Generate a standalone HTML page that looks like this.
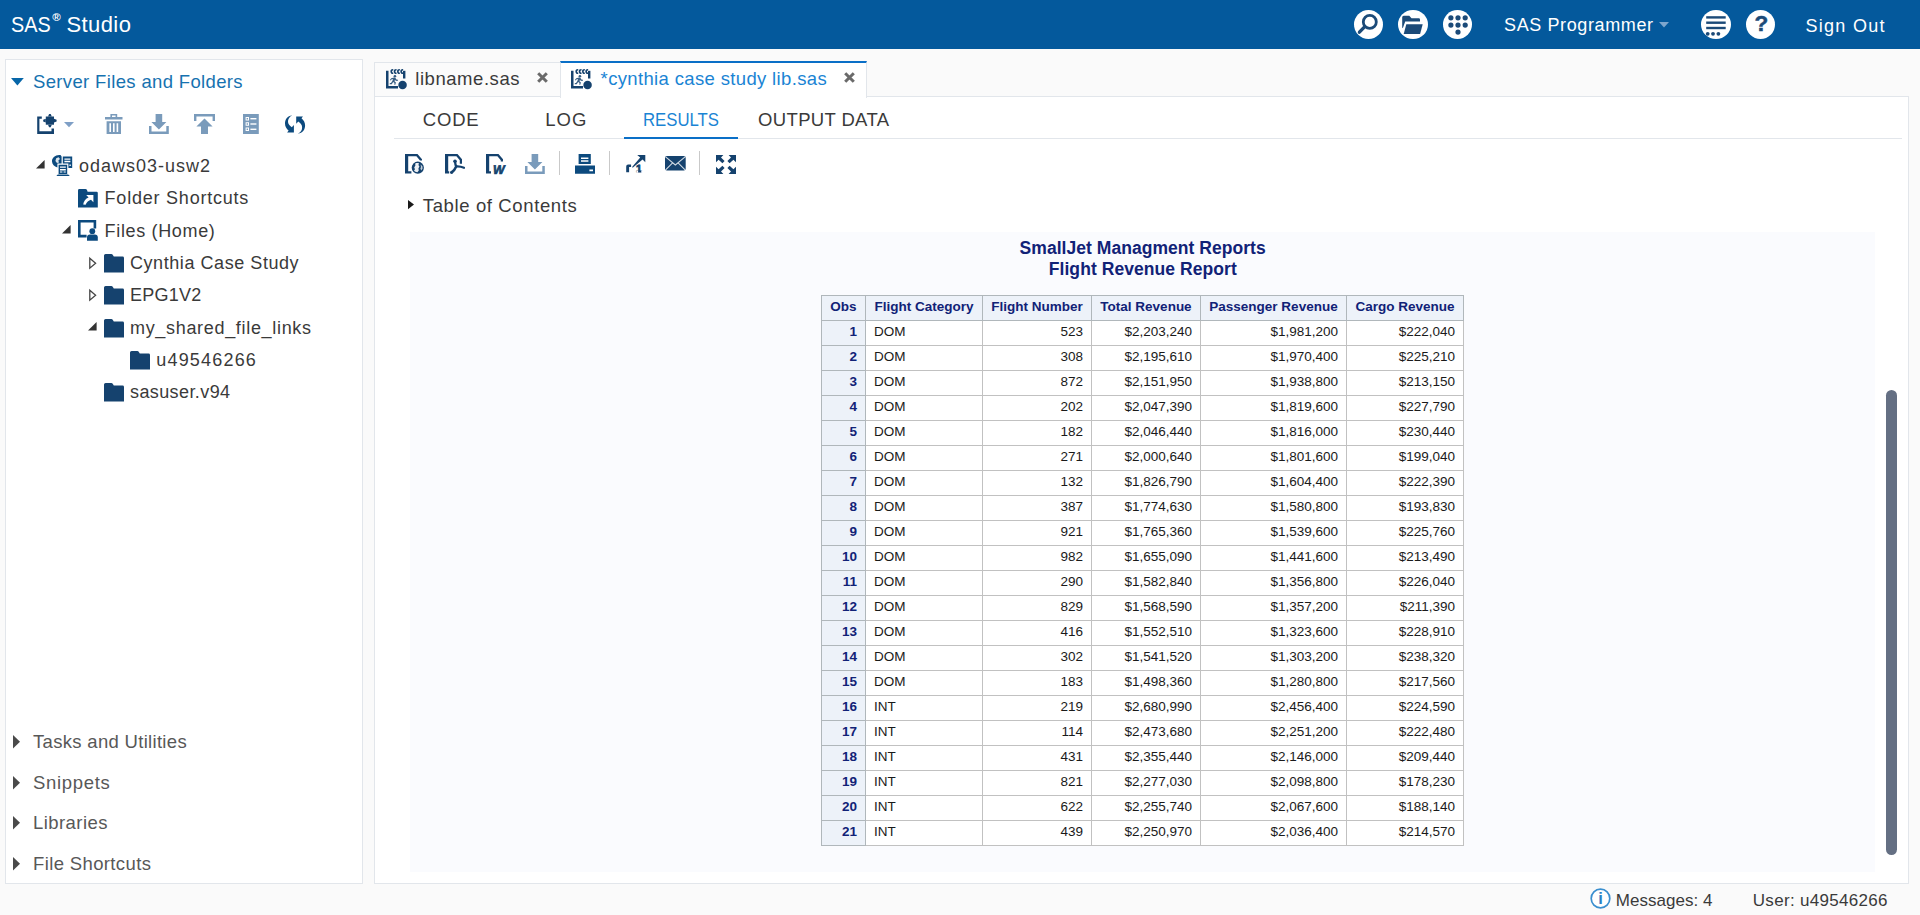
<!DOCTYPE html><html lang="en"><head><meta charset="utf-8"><title>SAS Studio</title><style>
*{box-sizing:border-box}
html,body{margin:0;padding:0}
body{width:1920px;height:915px;overflow:hidden;background:#fafafa;font-family:"Liberation Sans",sans-serif;position:relative}
.t{position:absolute;white-space:pre;line-height:1}
.abs{position:absolute}
svg{position:absolute;overflow:visible}
#hdr{position:absolute;left:0;top:0;width:1920px;height:48.5px;background:#04599c}
.circ{position:absolute;top:10px;width:29px;height:29px;border-radius:50%;background:#fff}
#left{position:absolute;left:5px;top:59px;width:357.5px;height:824.5px;background:#fff;border:1px solid #e2e6eb}
#main{position:absolute;left:374px;top:96px;width:1535px;height:787.5px;background:#fff;border:1px solid #e2e6eb}
#tab1{position:absolute;left:374px;top:62px;width:186.5px;height:35px;background:#fbfbfb;border:1px solid #e2e6eb}
#tab2{position:absolute;left:559.5px;top:60.5px;width:307.5px;height:37px;background:#fff;border-left:1px solid #e2e6eb;border-right:1px solid #e2e6eb;border-top:2.5px solid #0a6fc7}
#subline{position:absolute;left:394px;top:138px;width:1508px;height:1px;background:#e2e6eb}
#resline{position:absolute;left:624px;top:136.5px;width:114px;height:2.5px;background:#0a6fc7}
.sep{position:absolute;top:151px;width:1px;height:24px;background:#c9c9c9}
#res{position:absolute;left:410px;top:232px;width:1465px;height:639.5px;background:#fafbfe}
#sb{position:absolute;left:1886px;top:390px;width:11px;height:465px;border-radius:5.5px;background:#646f83}
table.r{position:absolute;left:821px;top:295px;border-collapse:collapse;table-layout:fixed;font-size:13.5px;color:#000}
table.r td,table.r th{border:1px solid #c1c1c1;height:25px;padding:0 8px 3px 8px;line-height:17px;vertical-align:middle;white-space:nowrap;overflow:hidden}
table.r th{background:#edf2f9;color:#112277;font-weight:700;border-color:#b0b7bb;text-align:center}
table.r th.o{text-align:right}
table.r td{background:#fff;text-align:right;color:#1a1a1a}
table.r td.l{text-align:left}
</style></head><body>
<div id="hdr"></div>
<span class="t" style="left:10.5px;top:14.0px;font-size:22px;color:#fff;transform:scaleX(.9);transform-origin:0 0;">SAS</span>
<span class="t" style="left:52.2px;top:11.6px;font-size:11.5px;color:#fff;font-weight:700;">®</span>
<span class="t" style="left:66.5px;top:14.0px;font-size:22px;color:#fff;letter-spacing:0.4px;">Studio</span>
<div class="circ" style="left:1353.9px;width:29.0px"></div>
<div class="circ" style="left:1398.1px;width:29.7px"></div>
<div class="circ" style="left:1443px;width:29.2px"></div>
<div class="circ" style="left:1700.9px;width:29.9px"></div>
<div class="circ" style="left:1746px;width:29.0px"></div>
<svg style="left:1353px;top:9px" width="31" height="31" viewBox="1353 9 31 31"><circle cx="1369.8" cy="21.9" r="6.5" fill="none" stroke="#1b4a78" stroke-width="2.8"/><path d="M1364.8 26.6 L1359.4 32.2" stroke="#1b4a78" stroke-width="3.3" stroke-linecap="round"/></svg>
<svg style="left:1398px;top:9px" width="31" height="31" viewBox="1398 9 31 31"><path d="M1402.2 27.5 V17.2 q0-1.5 1.5-1.5 h5.6 l2.2 2.5 h7.3 q1.2 0 1.2 1.2 v2 h-14.8 l-2.4 6.8z" fill="#1b4a78"/><path d="M1406.3 24.3 H1422.7 L1420.1 33.9 H1403.7z" fill="#1b4a78"/></svg>
<svg style="left:1443px;top:9px" width="31" height="31" viewBox="1443 9 31 31"><g fill="#1b4a78"><circle cx="1450.9" cy="17.85" r="2.6"/><circle cx="1458" cy="17.85" r="2.6"/><circle cx="1465.2" cy="17.85" r="2.6"/><circle cx="1450.9" cy="25.1" r="2.6"/><circle cx="1458" cy="25.1" r="2.6"/><circle cx="1465.2" cy="25.1" r="2.6"/><circle cx="1458" cy="32.1" r="2.6"/></g></svg>
<span class="t" style="left:1504.0px;top:15.6px;font-size:18px;color:#fff;letter-spacing:0.62px;">SAS Programmer</span>
<svg style="left:1659px;top:22px" width="10" height="6" viewBox="0 0 10 6"><path d="M0 0H10L5 5.5z" fill="#7ea6cd"/></svg>
<svg style="left:1700px;top:9px" width="31" height="31" viewBox="1700 9 31 31"><g fill="#1b4a78"><rect x="1706.2" y="16.2" width="19.5" height="2.4"/><rect x="1706.2" y="21.5" width="19.5" height="2.4"/><rect x="1706.2" y="26.8" width="19.5" height="2.4"/><circle cx="1707.7" cy="33.8" r="1.9"/><circle cx="1713" cy="33.8" r="1.9"/><circle cx="1718.4" cy="33.8" r="1.9"/></g></svg>
<span class="t" style="left:1754.6px;top:13.4px;font-size:22.5px;font-weight:700;-webkit-text-stroke:0.5px #1b4a78;color:#1b4a78">?</span>
<span class="t" style="left:1805.5px;top:16.8px;font-size:18px;color:#fff;letter-spacing:1.28px;">Sign Out</span>
<div id="left"></div>
<svg style="left:11px;top:78px" width="13" height="8" viewBox="0 0 13 8"><path d="M0 0H12.8L6.4 7.6z" fill="#0766a8"/></svg>
<span class="t" style="left:33.0px;top:73.0px;font-size:18.5px;color:#1672b0;letter-spacing:0.35px;">Server Files and Folders</span>
<svg style="left:36px;top:113px" width="22" height="22" viewBox="36 113 22 22"><g fill="#15426e"><path d="M41.8 116.6H37.2V133.9H54V128.5H51.5V131.2H39.4V118.7H41.8z"/><rect x="45.8" y="116.5" width="8.2" height="8.2"/><path d="M48.0 116.5L49.1 113.89999999999999H50.699999999999996L51.8 116.5zM48.0 124.69999999999999L49.1 127.3H50.699999999999996L51.8 124.69999999999999zM45.8 118.69999999999999L43.199999999999996 119.8V121.39999999999999L45.8 122.5zM54.0 118.69999999999999L56.6 119.8V121.39999999999999L54.0 122.5z"/></g></svg>
<svg style="left:64px;top:122px" width="10" height="6" viewBox="0 0 10 6"><path d="M0 0H10L5 5.3z" fill="#7f9fc6"/></svg>
<svg style="left:104px;top:113px" width="20" height="22" viewBox="104 113 20 22"><g fill="#7a9bbb"><path d="M110.4 114H117.2V117H122.5V119.6H105V117H110.4z M112 115.4V117H115.6V115.4z"/><path d="M106.6 121.2H121V134H106.6z M109.4 123.2V132H111V123.2z M113 123.2V132H114.6V123.2z M116.6 123.2V132H118.2V123.2z" fill-rule="evenodd"/></g></svg>
<svg style="left:149px;top:114px" width="20" height="20" viewBox="0 0 20 20"><g fill="#7a9bbb"><path d="M6.6 0H13.2V8H17.4L9.9 15.6L2.4 8H6.6z"/><path d="M0 12H2.5V17.5H17.3V12H19.8V20H0z"/></g></svg>
<svg style="left:194px;top:114px" width="21" height="20" viewBox="0 0 21 20"><g fill="#7a9bbb"><path d="M0 0H21V7H18.6V2.4H2.4V7H0z"/><path d="M10.5 4.6L18.6 12.4H14V20H7V12.4H2.4z"/></g></svg>
<svg style="left:243px;top:114px" width="16" height="20" viewBox="0 0 16 20"><rect width="15.8" height="20" fill="#7a9bbb"/><g fill="#fff"><path d="M2.6 3H6V6.4H2.6z M3.6 4V5.4H5V4z" fill-rule="evenodd"/><path d="M2.6 8.3H6V11.7H2.6z M3.6 9.3V10.7H5V9.3z" fill-rule="evenodd"/><path d="M2.6 13.6H6V17H2.6z M3.6 14.6V16H5V14.6z" fill-rule="evenodd"/><rect x="7.4" y="4" width="6" height="1.4"/><rect x="7.4" y="9.3" width="6" height="1.4"/><rect x="7.4" y="14.6" width="6" height="1.4"/></g></svg>
<svg style="left:285px;top:115px" width="21" height="19" viewBox="0 0 21 19"><g fill="#0c4a7e"><path d="M7.1 0.4C3 0.2 0 4 0 8.4C0 11.6 1.6 13.8 3.6 15.6L2.1 17.5H8.9V10.1L6.8 12.3C4.6 10.6 3.2 9 3 7C2.8 4 4.4 1.6 7.1 0.4z"/><path d="M7.1 0.4C3 0.2 0 4 0 8.4C0 11.6 1.6 13.8 3.6 15.6L2.1 17.5H8.9V10.1L6.8 12.3C4.6 10.6 3.2 9 3 7C2.8 4 4.4 1.6 7.1 0.4z" transform="rotate(180 10.05 9.45)"/></g></svg>
<svg style="left:36.3px;top:160.4px" width="9" height="9" viewBox="0 0 9 9"><path d="M8.6 0V8.6H0z" fill="#333"/></svg>
<svg style="left:51px;top:154px" width="23" height="23" viewBox="51 154 23 23"><g fill="#0c4a7e">
<path d="M60.5 155C55.5 154.4 51.8 157.6 52 161.6C52.2 164.4 54.2 166.6 57.4 167.4V163.4H61.6V156.6z"/>
<path d="M62.8 156.6H72.2V168H68.4V163.4H62.8z M64.4 158.4V159.8H70.4V158.4z M64.4 160.8V162.2H70.4V160.8z M69.4 164.4V166H70.8V164.4z" fill-rule="evenodd"/>
<path d="M58.6 164.7H67.2V174H58.6z M60 166.4V167.8H65.8V166.4z M60 169V170.4H65.8V169z M60 171.4V172.6H62.4V171.4z M63.6 171.4V172.6H65.8V171.4z" fill-rule="evenodd"/>
<path d="M56.4 176L57.8 174.4H68.2L69.8 176z"/></g>
<path d="M56.2 158.2L58.6 157.2L60 159L58.4 160.6L59 162.4L57 163L55.4 161z" fill="#fff" opacity=".85"/></svg>
<span class="t" style="left:79.0px;top:156.5px;font-size:18px;color:#3a3a3a;letter-spacing:1.0px;">odaws03-usw2</span>
<svg style="left:78px;top:188.8px" width="20" height="19" viewBox="0 0 20 19"><path d="M0 1.4Q0 0 1.4 0H7.4Q8.6 0 9 1.1L9.6 2.7H18.6Q19.8 2.7 19.8 4V18.6H0z" fill="#0c4a7e"/>
<path d="M8.2 6H15.4V13.2L13 10.8C10.6 11.4 8.6 13.2 7.6 15.8L5.2 15.6C5.6 12 7.6 9.6 10.6 8.4z" fill="#fff"/></svg>
<span class="t" style="left:104.6px;top:188.6px;font-size:18px;color:#3a3a3a;letter-spacing:0.78px;">Folder Shortcuts</span>
<svg style="left:61.9px;top:225.4px" width="9" height="9" viewBox="0 0 9 9"><path d="M8.6 0V8.6H0z" fill="#333"/></svg>
<svg style="left:78px;top:220px" width="20" height="21" viewBox="0 0 20 21"><g fill="#0c4a7e"><path d="M0 0H18.2V8.6H15.6V2.6H2.6V14.8H8.6V17.4H0z"/><circle cx="14.3" cy="11.2" r="2.9"/><path d="M9 20.8V17.6Q9 14.6 12 14.6H16.8Q19.8 14.6 19.8 17.6V20.8z"/></g></svg>
<span class="t" style="left:104.6px;top:221.75px;font-size:18px;color:#3a3a3a;letter-spacing:0.66px;">Files (Home)</span>
<svg style="left:88.6px;top:256.6px" width="8" height="13" viewBox="0 0 8 13"><path d="M0.8 1.2L6.6 6.2L0.8 11.2z" fill="none" stroke="#444" stroke-width="1.3" stroke-linejoin="miter"/></svg>
<svg style="left:104px;top:254.3px" width="20" height="19" viewBox="0 0 20 19"><path d="M0 1.6Q0 0 1.6 0H7.2Q8.4 0 9 1.2L9.8 2.6H18.6Q20 2.6 20 4V18.4H0z" fill="#15426e"/></svg>
<span class="t" style="left:130.0px;top:254.0px;font-size:18px;color:#3a3a3a;letter-spacing:0.56px;">Cynthia Case Study</span>
<svg style="left:88.6px;top:288.6px" width="8" height="13" viewBox="0 0 8 13"><path d="M0.8 1.2L6.6 6.2L0.8 11.2z" fill="none" stroke="#444" stroke-width="1.3" stroke-linejoin="miter"/></svg>
<svg style="left:104px;top:286.2px" width="20" height="19" viewBox="0 0 20 19"><path d="M0 1.6Q0 0 1.6 0H7.2Q8.4 0 9 1.2L9.8 2.6H18.6Q20 2.6 20 4V18.4H0z" fill="#15426e"/></svg>
<span class="t" style="left:130.0px;top:286.0px;font-size:18px;color:#3a3a3a;letter-spacing:0.24px;">EPG1V2</span>
<svg style="left:87.8px;top:322.2px" width="9" height="9" viewBox="0 0 9 9"><path d="M8.6 0V8.6H0z" fill="#333"/></svg>
<svg style="left:104px;top:318.6px" width="20" height="19" viewBox="0 0 20 19"><path d="M0 1.6Q0 0 1.6 0H7.2Q8.4 0 9 1.2L9.8 2.6H18.6Q20 2.6 20 4V18.4H0z" fill="#15426e"/></svg>
<span class="t" style="left:130.0px;top:318.75px;font-size:18px;color:#3a3a3a;letter-spacing:0.68px;">my_shared_file_links</span>
<svg style="left:129.5px;top:351.1px" width="20" height="19" viewBox="0 0 20 19"><path d="M0 1.6Q0 0 1.6 0H7.2Q8.4 0 9 1.2L9.8 2.6H18.6Q20 2.6 20 4V18.4H0z" fill="#15426e"/></svg>
<span class="t" style="left:156.25px;top:350.75px;font-size:18px;color:#3a3a3a;letter-spacing:1.19px;">u49546266</span>
<svg style="left:104px;top:382.8px" width="20" height="19" viewBox="0 0 20 19"><path d="M0 1.6Q0 0 1.6 0H7.2Q8.4 0 9 1.2L9.8 2.6H18.6Q20 2.6 20 4V18.4H0z" fill="#15426e"/></svg>
<span class="t" style="left:130.0px;top:382.6px;font-size:18px;color:#3a3a3a;letter-spacing:0.4px;">sasuser.v94</span>
<svg style="left:13px;top:734.6px" width="8" height="14" viewBox="0 0 8 14"><path d="M0 0L7 6.8L0 13.6z" fill="#4a4a4a"/></svg>
<span class="t" style="left:33.0px;top:732.75px;font-size:18.5px;color:#585858;letter-spacing:0.31px;">Tasks and Utilities</span>
<svg style="left:13px;top:776.0px" width="8" height="14" viewBox="0 0 8 14"><path d="M0 0L7 6.8L0 13.6z" fill="#4a4a4a"/></svg>
<span class="t" style="left:33.0px;top:773.5px;font-size:18.5px;color:#585858;letter-spacing:0.68px;">Snippets</span>
<svg style="left:13px;top:816.4000000000001px" width="8" height="14" viewBox="0 0 8 14"><path d="M0 0L7 6.8L0 13.6z" fill="#4a4a4a"/></svg>
<span class="t" style="left:33.0px;top:813.75px;font-size:18.5px;color:#585858;letter-spacing:0.44px;">Libraries</span>
<svg style="left:13px;top:857.2px" width="8" height="14" viewBox="0 0 8 14"><path d="M0 0L7 6.8L0 13.6z" fill="#4a4a4a"/></svg>
<span class="t" style="left:33.0px;top:854.5px;font-size:18.5px;color:#585858;letter-spacing:0.37px;">File Shortcuts</span>
<div id="main"></div><div id="tab1"></div><div id="tab2"></div>
<svg style="left:386.2px;top:69.2px" width="21" height="20" viewBox="0 0 21 20"><g fill="#15426e"><path d="M0 1.8H2.5V17H12V19.4H0z"/><rect x="17" y="1.8" width="2.4" height="7.7"/><path d="M7.199999999999999 0.8C4.6 0.4 4.6 4.6 7.199999999999999 4.2" fill="none" stroke="#15426e" stroke-width="1.7"/><path d="M10.5 0.8C7.9 0.4 7.9 4.6 10.5 4.2" fill="none" stroke="#15426e" stroke-width="1.7"/><path d="M13.799999999999999 0.8C11.2 0.4 11.2 4.6 13.799999999999999 4.2" fill="none" stroke="#15426e" stroke-width="1.7"/><path d="M17.1 0.8C14.5 0.4 14.5 4.6 17.1 4.2" fill="none" stroke="#15426e" stroke-width="1.7"/><circle cx="16.55" cy="15.9" r="4.25"/>
<g opacity=".85"><circle cx="8.9" cy="7.3" r="1.3"/><path d="M5.2 9.2L8.2 8.5L9.5 9L10.4 10.5L11.9 10.7L11.7 11.9L9.7 11.7L9 10.7L8.5 12.2L9.9 13.6L9.3 15.7L8.1 15.4L8.6 13.9L7.2 12.9L5.7 15.3L3.7 15.3L3.9 14.1L5 14.1L6.5 11.8L6.9 9.9L5.6 10.3L4.9 11.5L3.9 11z"/></g></g></svg>
<span class="t" style="left:415.25px;top:70.0px;font-size:18.5px;color:#3a3a3a;letter-spacing:0.55px;">libname.sas</span>
<svg style="left:537px;top:72px" width="11" height="11" viewBox="0 0 11 11"><path d="M1.2 1.2L9.8 9.8M9.8 1.2L1.2 9.8" stroke="#6a6a6a" stroke-width="3" stroke-linecap="butt"/></svg>
<svg style="left:571.2px;top:69.2px" width="21" height="20" viewBox="0 0 21 20"><g fill="#15426e"><path d="M0 1.8H2.5V17H12V19.4H0z"/><rect x="17" y="1.8" width="2.4" height="7.7"/><path d="M7.199999999999999 0.8C4.6 0.4 4.6 4.6 7.199999999999999 4.2" fill="none" stroke="#15426e" stroke-width="1.7"/><path d="M10.5 0.8C7.9 0.4 7.9 4.6 10.5 4.2" fill="none" stroke="#15426e" stroke-width="1.7"/><path d="M13.799999999999999 0.8C11.2 0.4 11.2 4.6 13.799999999999999 4.2" fill="none" stroke="#15426e" stroke-width="1.7"/><path d="M17.1 0.8C14.5 0.4 14.5 4.6 17.1 4.2" fill="none" stroke="#15426e" stroke-width="1.7"/><circle cx="16.55" cy="15.9" r="4.25"/>
<g opacity=".85"><circle cx="8.9" cy="7.3" r="1.3"/><path d="M5.2 9.2L8.2 8.5L9.5 9L10.4 10.5L11.9 10.7L11.7 11.9L9.7 11.7L9 10.7L8.5 12.2L9.9 13.6L9.3 15.7L8.1 15.4L8.6 13.9L7.2 12.9L5.7 15.3L3.7 15.3L3.9 14.1L5 14.1L6.5 11.8L6.9 9.9L5.6 10.3L4.9 11.5L3.9 11z"/></g></g></svg>
<span class="t" style="left:600.6px;top:70.0px;font-size:18.5px;color:#1a84d4;letter-spacing:0.35px;">*cynthia case study lib.sas</span>
<svg style="left:844px;top:72px" width="11" height="11" viewBox="0 0 11 11"><path d="M1.2 1.2L9.8 9.8M9.8 1.2L1.2 9.8" stroke="#6a6a6a" stroke-width="3" stroke-linecap="butt"/></svg>
<span class="t" style="left:422.75px;top:111.0px;font-size:18.5px;color:#3a3a3a;letter-spacing:0.83px;">CODE</span>
<span class="t" style="left:545.25px;top:111.0px;font-size:18.5px;color:#3a3a3a;letter-spacing:1.0px;">LOG</span>
<span class="t" style="left:642.75px;top:111.0px;font-size:18.5px;color:#1a84d4;transform:scaleX(.905);transform-origin:0 0;">RESULTS</span>
<span class="t" style="left:758.0px;top:111.0px;font-size:18.5px;color:#3a3a3a;letter-spacing:0.36px;">OUTPUT DATA</span>
<div id="subline"></div><div id="resline"></div>
<svg style="left:405px;top:154.1px" width="20" height="20" viewBox="0 0 20 20"><path d="M0 0H12.5L17 5.3V6.6H14.8V6.2L11.4 2.2H3.2V17.2H6.4V19.6H0z" fill="#15426e"/><circle cx="12.8" cy="13.7" r="6.1" fill="#15426e"/><path d="M10.2 9.6C11.6 9 13 9 14 9.4L13.4 11L14.4 12.6L13.4 14.4L13.8 16.4L12.4 18.2C11 18.2 9.8 17.6 9 16.6L10 15.2L9.2 13.4L10.4 11.6z" fill="#fff" opacity=".92"/><path d="M15.6 10.6L17.4 12.2L17.6 14.6L16.2 16.6L15.4 14.6L16 13z" fill="#fff" opacity=".75"/></svg>
<svg style="left:445.4px;top:154.1px" width="21" height="20" viewBox="0 0 21 20"><path d="M0 0H12.5L17 5.3V9.7H14.8V6.2L11.4 2.2H3.2V17.2H4.2V19.6H0z" fill="#15426e"/><g fill="none" stroke="#15426e" stroke-linecap="round"><path d="M10 7.4C10.2 9.6 10.6 11.2 11.2 12.4" stroke-width="2.3"/><path d="M11.2 12.4C13.6 12.2 16.4 12.6 19 13.8" stroke-width="2.1"/><path d="M11.2 12.4C10.2 14.8 8.6 17 6.6 18.5" stroke-width="2.5"/></g><circle cx="10" cy="7.2" r="1.8" fill="#15426e"/><circle cx="6.6" cy="18.3" r="1.5" fill="#15426e"/></svg>
<svg style="left:486.3px;top:154.1px" width="20" height="20" viewBox="0 0 20 20"><path d="M0 0H12.5L17 5.3V7.6H14.8V6.2L11.4 2.2H3.2V17.2H5V19.6H0z" fill="#15426e"/><text x="6.9" y="19.6" font-family="Liberation Sans,sans-serif" font-weight="700" font-style="italic" font-size="12.4" fill="#15426e" stroke="#15426e" stroke-width="0.7" text-rendering="geometricPrecision" textLength="11.6" lengthAdjust="spacingAndGlyphs">W</text></svg>
<svg style="left:525px;top:154px" width="20" height="20" viewBox="0 0 20 20"><g fill="#7a9bbb"><path d="M6.6 0H13.2V8H17.4L9.9 15.6L2.4 8H6.6z"/><path d="M0 12H2.5V17.5H17.3V12H19.8V20H0z"/></g></svg>
<div class="sep" style="left:559px"></div><div class="sep" style="left:609.3px"></div><div class="sep" style="left:699.3px"></div>
<svg style="left:575px;top:154px" width="20" height="20" viewBox="0 0 20 20"><g fill="#0c4a7e"><path d="M3.6 0H15.8V10H3.6z M6 3.4V5H13.4V3.4z M6 6.2V7.8H13.4V6.2z" fill-rule="evenodd"/><path d="M0 11.6H20V19.8H0z M14.4 15.4V17.2H18V15.4z" fill-rule="evenodd"/></g></svg>
<svg style="left:625.6px;top:155px" width="20" height="18" viewBox="0 0 20 18"><g fill="#15426e"><path d="M11.2 0.1H19.3V7.2L16.6 4.5L6.7 12.7L6.1 12.1L14.2 2.5z"/><path d="M0.2 17.2V11.4Q0.2 9.5 2.1 9.5H5.1V12.1H3.1V17.2z"/><text x="10.1" y="17.2" font-family="Liberation Sans,sans-serif" font-weight="700" font-size="10.4" stroke="#15426e" stroke-width="0.8" text-rendering="geometricPrecision">1</text></g><rect x="10.4" y="15.6" width="1.7" height="2.2" fill="#fff"/><rect x="15.3" y="15.6" width="1.8" height="2.2" fill="#fff"/></svg>
<svg style="left:665.2px;top:156.1px" width="21" height="15" viewBox="0 0 21 15"><rect width="20.7" height="14.6" rx="1.8" fill="#15426e"/><path d="M0.6 0.8L10.35 9L20.1 0.8M0.6 13.9L7.6 6.8M20.1 13.9L13.1 6.8" fill="none" stroke="#fff" stroke-width="1.1" opacity=".8"/></svg>
<svg style="left:716.2px;top:155px" width="20" height="19" viewBox="0 0 20 18.8"><g fill="#15426e"><g transform="rotate(0 10 9.4)"><path d="M0 0H7.4L5 2.4L8.6 6L6.4 8.2L2.6 4.6L0 7.2z"/></g><g transform="translate(20 0) scale(-1 1)"><path d="M0 0H7.4L5 2.4L8.6 6L6.4 8.2L2.6 4.6L0 7.2z"/></g><g transform="translate(0 18.8) scale(1 -1)"><path d="M0 0H7.4L5 2.4L8.6 6L6.4 8.2L2.6 4.6L0 7.2z"/></g><g transform="translate(20 18.8) scale(-1 -1)"><path d="M0 0H7.4L5 2.4L8.6 6L6.4 8.2L2.6 4.6L0 7.2z"/></g></g></svg>
<svg style="left:408px;top:200px" width="7" height="10" viewBox="0 0 7 10"><path d="M0 0L6 4.6L0 9.2z" fill="#1a1a1a"/></svg>
<span class="t" style="left:422.75px;top:196.9px;font-size:18.5px;color:#3a3a3a;letter-spacing:0.63px;">Table of Contents</span>
<div id="res"></div>
<span class="t" style="left:1019.6px;top:239.75px;font-size:17.5px;color:#112277;letter-spacing:0.04px;font-weight:700;">SmallJet Managment Reports</span>
<span class="t" style="left:1048.75px;top:260.75px;font-size:17.5px;color:#112277;letter-spacing:0.07px;font-weight:700;">Flight Revenue Report</span>
<table class="r"><colgroup><col style="width:44px"><col style="width:117px"><col style="width:109px"><col style="width:109px"><col style="width:146px"><col style="width:117px"></colgroup>
<tr><th>Obs</th><th>Flight Category</th><th>Flight Number</th><th>Total Revenue</th><th>Passenger Revenue</th><th>Cargo Revenue</th></tr>
<tr><th class="o">1</th><td class="l">DOM</td><td>523</td><td>$2,203,240</td><td>$1,981,200</td><td>$222,040</td></tr>
<tr><th class="o">2</th><td class="l">DOM</td><td>308</td><td>$2,195,610</td><td>$1,970,400</td><td>$225,210</td></tr>
<tr><th class="o">3</th><td class="l">DOM</td><td>872</td><td>$2,151,950</td><td>$1,938,800</td><td>$213,150</td></tr>
<tr><th class="o">4</th><td class="l">DOM</td><td>202</td><td>$2,047,390</td><td>$1,819,600</td><td>$227,790</td></tr>
<tr><th class="o">5</th><td class="l">DOM</td><td>182</td><td>$2,046,440</td><td>$1,816,000</td><td>$230,440</td></tr>
<tr><th class="o">6</th><td class="l">DOM</td><td>271</td><td>$2,000,640</td><td>$1,801,600</td><td>$199,040</td></tr>
<tr><th class="o">7</th><td class="l">DOM</td><td>132</td><td>$1,826,790</td><td>$1,604,400</td><td>$222,390</td></tr>
<tr><th class="o">8</th><td class="l">DOM</td><td>387</td><td>$1,774,630</td><td>$1,580,800</td><td>$193,830</td></tr>
<tr><th class="o">9</th><td class="l">DOM</td><td>921</td><td>$1,765,360</td><td>$1,539,600</td><td>$225,760</td></tr>
<tr><th class="o">10</th><td class="l">DOM</td><td>982</td><td>$1,655,090</td><td>$1,441,600</td><td>$213,490</td></tr>
<tr><th class="o">11</th><td class="l">DOM</td><td>290</td><td>$1,582,840</td><td>$1,356,800</td><td>$226,040</td></tr>
<tr><th class="o">12</th><td class="l">DOM</td><td>829</td><td>$1,568,590</td><td>$1,357,200</td><td>$211,390</td></tr>
<tr><th class="o">13</th><td class="l">DOM</td><td>416</td><td>$1,552,510</td><td>$1,323,600</td><td>$228,910</td></tr>
<tr><th class="o">14</th><td class="l">DOM</td><td>302</td><td>$1,541,520</td><td>$1,303,200</td><td>$238,320</td></tr>
<tr><th class="o">15</th><td class="l">DOM</td><td>183</td><td>$1,498,360</td><td>$1,280,800</td><td>$217,560</td></tr>
<tr><th class="o">16</th><td class="l">INT</td><td>219</td><td>$2,680,990</td><td>$2,456,400</td><td>$224,590</td></tr>
<tr><th class="o">17</th><td class="l">INT</td><td>114</td><td>$2,473,680</td><td>$2,251,200</td><td>$222,480</td></tr>
<tr><th class="o">18</th><td class="l">INT</td><td>431</td><td>$2,355,440</td><td>$2,146,000</td><td>$209,440</td></tr>
<tr><th class="o">19</th><td class="l">INT</td><td>821</td><td>$2,277,030</td><td>$2,098,800</td><td>$178,230</td></tr>
<tr><th class="o">20</th><td class="l">INT</td><td>622</td><td>$2,255,740</td><td>$2,067,600</td><td>$188,140</td></tr>
<tr><th class="o">21</th><td class="l">INT</td><td>439</td><td>$2,250,970</td><td>$2,036,400</td><td>$214,570</td></tr>
</table>
<div id="sb"></div>
<svg style="left:1589.5px;top:887.5px" width="21" height="21" viewBox="0 0 21 21"><circle cx="10.5" cy="10.5" r="9.3" fill="#fff" stroke="#3a8fcf" stroke-width="1.7"/><text x="10.5" y="16" text-anchor="middle" font-family="Liberation Sans,sans-serif" font-weight="700" font-size="16.5" fill="#2a7fc4">i</text></svg>
<span class="t" style="left:1615.8px;top:892.0px;font-size:17px;color:#3a3a3a;letter-spacing:0.04px;">Messages: 4</span>
<span class="t" style="left:1752.75px;top:892.0px;font-size:17px;color:#3a3a3a;letter-spacing:0.31px;">User: u49546266</span>
</body></html>
